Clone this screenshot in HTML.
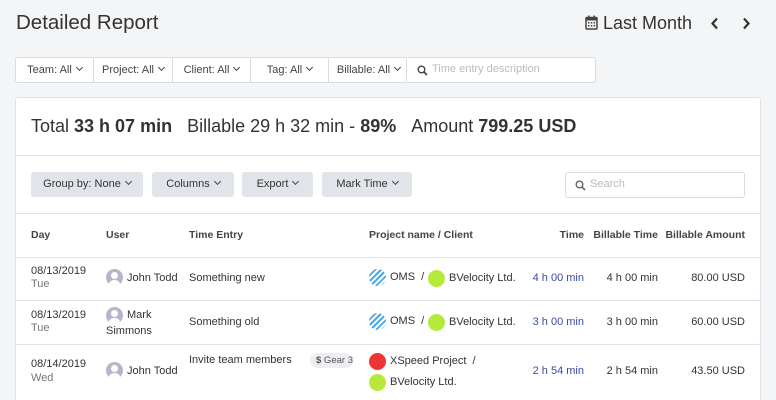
<!DOCTYPE html>
<html><head><style>
*{box-sizing:border-box;margin:0;padding:0}
html,body{width:776px;height:400px;overflow:hidden}
body{background:#f4f5f7;font-family:"Liberation Sans",sans-serif;color:#333;position:relative}
.a{position:absolute;white-space:nowrap}
.fb{position:absolute;top:57px;height:26px;background:#fff;border:1px solid #d9dce1;border-radius:3px}
.seg{position:absolute;top:0;height:24px;line-height:24px;font-size:11px;color:#444;text-align:center;border-right:1px solid #d9dce1}
.chev{display:inline-block;width:5px;height:5px;border-right:1.5px solid #444;border-bottom:1.5px solid #444;transform:rotate(45deg);margin-left:5px;position:relative;top:-3px}
.card{position:absolute;left:15px;top:97px;width:746px;height:303px;background:#fff;border:1px solid #dfe2e6;border-bottom:none;border-radius:3px 3px 0 0}
.btn{position:absolute;top:172px;height:25px;line-height:25px;background:#e1e5ea;border-radius:3px;font-size:11px;color:#333;text-align:center}
.hl{position:absolute;left:16px;width:744px;height:1px;background:#dfe2e6}
.th{position:absolute;top:229px;font-size:10.5px;font-weight:bold;color:#444}
.t{position:absolute;font-size:11px;color:#333;white-space:nowrap}
.g{color:#777}
.blue{color:#3a4aa8}
.av{position:absolute;width:17px;height:17px;border-radius:50%;background:#b7b5c8;overflow:hidden}
.av:before{content:"";position:absolute;left:5px;top:3px;width:7px;height:7px;border-radius:50%;background:#fff}
.av:after{content:"";position:absolute;left:3px;top:11px;width:11px;height:8px;border-radius:50%;background:#fff}
.dot{position:absolute;width:17px;height:17px;border-radius:50%}
.oms{background:repeating-linear-gradient(135deg,#4aa9e9 0 2px,#fff 2px 4px)}
.grn{background:#b6ea3a}
.red{background:#f03434}
</style></head><body>
<div class="a" style="left:16px;top:11px;font-size:20.5px;color:#333">Detailed Report</div>
<svg class="a" style="left:585px;top:15px" width="13" height="15" viewBox="0 0 13 15"><rect x="1" y="2.5" width="11" height="11.5" rx="1" fill="none" stroke="#444" stroke-width="1.5"/><rect x="1" y="2.5" width="11" height="3" fill="#444"/><rect x="3" y="0.5" width="1.5" height="3" fill="#444"/><rect x="8.5" y="0.5" width="1.5" height="3" fill="#444"/><g fill="#444"><rect x="3" y="7" width="1.5" height="1.5"/><rect x="5.8" y="7" width="1.5" height="1.5"/><rect x="8.6" y="7" width="1.5" height="1.5"/><rect x="3" y="10" width="1.5" height="1.5"/><rect x="5.8" y="10" width="1.5" height="1.5"/><rect x="8.6" y="10" width="1.5" height="1.5"/></g></svg>
<div class="a" style="left:603px;top:13px;font-size:18px;color:#333">Last Month</div>
<svg class="a" style="left:710px;top:17px" width="10" height="13"><path d="M7 1.5L2.5 6.5L7 11.5" fill="none" stroke="#333" stroke-width="2.2"/></svg>
<svg class="a" style="left:741px;top:17px" width="10" height="13"><path d="M3 1.5L7.5 6.5L3 11.5" fill="none" stroke="#333" stroke-width="2.2"/></svg>

<div class="fb" style="left:15px;width:392px">
<div class="seg" style="left:0;width:78px">Team: All<span class="chev"></span></div>
<div class="seg" style="left:78px;width:79px">Project: All<span class="chev"></span></div>
<div class="seg" style="left:157px;width:78px">Client: All<span class="chev"></span></div>
<div class="seg" style="left:235px;width:78px">Tag: All<span class="chev"></span></div>
<div class="seg" style="left:313px;width:79px;border-right:none">Billable: All<span class="chev"></span></div>
</div>
<div class="fb" style="left:407px;width:189px;border-left:none;border-radius:0 3px 3px 0">
<svg class="a" style="left:10px;top:7px" width="11" height="11"><circle cx="4.5" cy="4.5" r="3.3" fill="none" stroke="#444" stroke-width="1.4"/><path d="M7 7L10 10" stroke="#444" stroke-width="1.6"/></svg>
<div class="a" style="left:25px;top:5px;font-size:11px;color:#bbb">Time entry description</div>
</div>

<div class="card"></div>
<div class="a" style="left:31px;top:116px;font-size:18px;color:#333">Total <b>33 h 07 min</b>&nbsp;&nbsp;&nbsp;Billable 29 h 32 min - <b>89%</b>&nbsp;&nbsp;&nbsp;Amount <b>799.25 USD</b></div>
<div class="hl" style="top:155px"></div>

<div class="btn" style="left:31px;width:112px">Group by: None<span class="chev"></span></div>
<div class="btn" style="left:152px;width:82px">Columns<span class="chev"></span></div>
<div class="btn" style="left:242px;width:71px">Export<span class="chev"></span></div>
<div class="btn" style="left:322px;width:90px">Mark Time<span class="chev"></span></div>
<div class="a" style="left:565px;top:172px;width:180px;height:26px;border:1px solid #d9dce1;border-radius:3px;background:#fff">
<svg class="a" style="left:9px;top:7px" width="11" height="11"><circle cx="4.5" cy="4.5" r="3.3" fill="none" stroke="#666" stroke-width="1.4"/><path d="M7 7L10 10" stroke="#666" stroke-width="1.6"/></svg>
<div class="a" style="left:24px;top:5px;font-size:11px;color:#bbb">Search</div></div>
<div class="hl" style="top:213px"></div>

<div class="th" style="left:31px">Day</div>
<div class="th" style="left:106px">User</div>
<div class="th" style="left:189px">Time Entry</div>
<div class="th" style="left:369px">Project name / Client</div>
<div class="th" style="right:192px">Time</div>
<div class="th" style="right:118px">Billable Time</div>
<div class="th" style="right:31px">Billable Amount</div>
<div class="hl" style="top:257px"></div>

<!-- row1 -->
<div class="t" style="left:31px;top:265px">08/13/2019</div><div class="t g" style="left:31px;top:278px">Tue</div>
<div class="av" style="left:106px;top:269px"></div><div class="t" style="left:127px;top:272px">John Todd</div>
<div class="t" style="left:189px;top:272px">Something new</div>
<div class="dot oms" style="left:369px;top:269px"></div><div class="t" style="left:390px;top:271px">OMS&nbsp;&nbsp;/</div>
<div class="dot grn" style="left:428px;top:270px"></div><div class="t" style="left:449px;top:272px">BVelocity Ltd.</div>
<div class="t blue" style="right:192px;top:272px">4 h 00 min</div>
<div class="t" style="right:118px;top:272px">4 h 00 min</div>
<div class="t" style="right:31px;top:272px">80.00 USD</div>
<div class="hl" style="top:300px"></div>

<!-- row2 -->
<div class="t" style="left:31px;top:309px">08/13/2019</div><div class="t g" style="left:31px;top:322px">Tue</div>
<div class="av" style="left:106px;top:307px"></div><div class="t" style="left:127px;top:309px">Mark</div><div class="t" style="left:106px;top:325px">Simmons</div>
<div class="t" style="left:189px;top:316px">Something old</div>
<div class="dot oms" style="left:369px;top:313px"></div><div class="t" style="left:390px;top:315px">OMS&nbsp;&nbsp;/</div>
<div class="dot grn" style="left:428px;top:314px"></div><div class="t" style="left:449px;top:316px">BVelocity Ltd.</div>
<div class="t blue" style="right:192px;top:316px">3 h 00 min</div>
<div class="t" style="right:118px;top:316px">3 h 00 min</div>
<div class="t" style="right:31px;top:316px">60.00 USD</div>
<div class="hl" style="top:344px"></div>

<!-- row3 -->
<div class="t" style="left:31px;top:358px">08/14/2019</div><div class="t g" style="left:31px;top:372px">Wed</div>
<div class="av" style="left:106px;top:362px"></div><div class="t" style="left:127px;top:365px">John Todd</div>
<div class="t" style="left:189px;top:354px">Invite team members</div>
<div class="a" style="left:310px;top:353px;width:43px;height:15px;border-radius:8px;background:#eceef2;font-size:9.5px;color:#555;line-height:15px;padding-left:6px"><b>$</b> Gear 3</div>
<div class="dot red" style="left:369px;top:353px"></div><div class="t" style="left:390px;top:355px">XSpeed Project&nbsp;&nbsp;/</div>
<div class="dot grn" style="left:369px;top:374px"></div><div class="t" style="left:390px;top:376px">BVelocity Ltd.</div>
<div class="t blue" style="right:192px;top:365px">2 h 54 min</div>
<div class="t" style="right:118px;top:365px">2 h 54 min</div>
<div class="t" style="right:31px;top:365px">43.50 USD</div>
</body></html>
